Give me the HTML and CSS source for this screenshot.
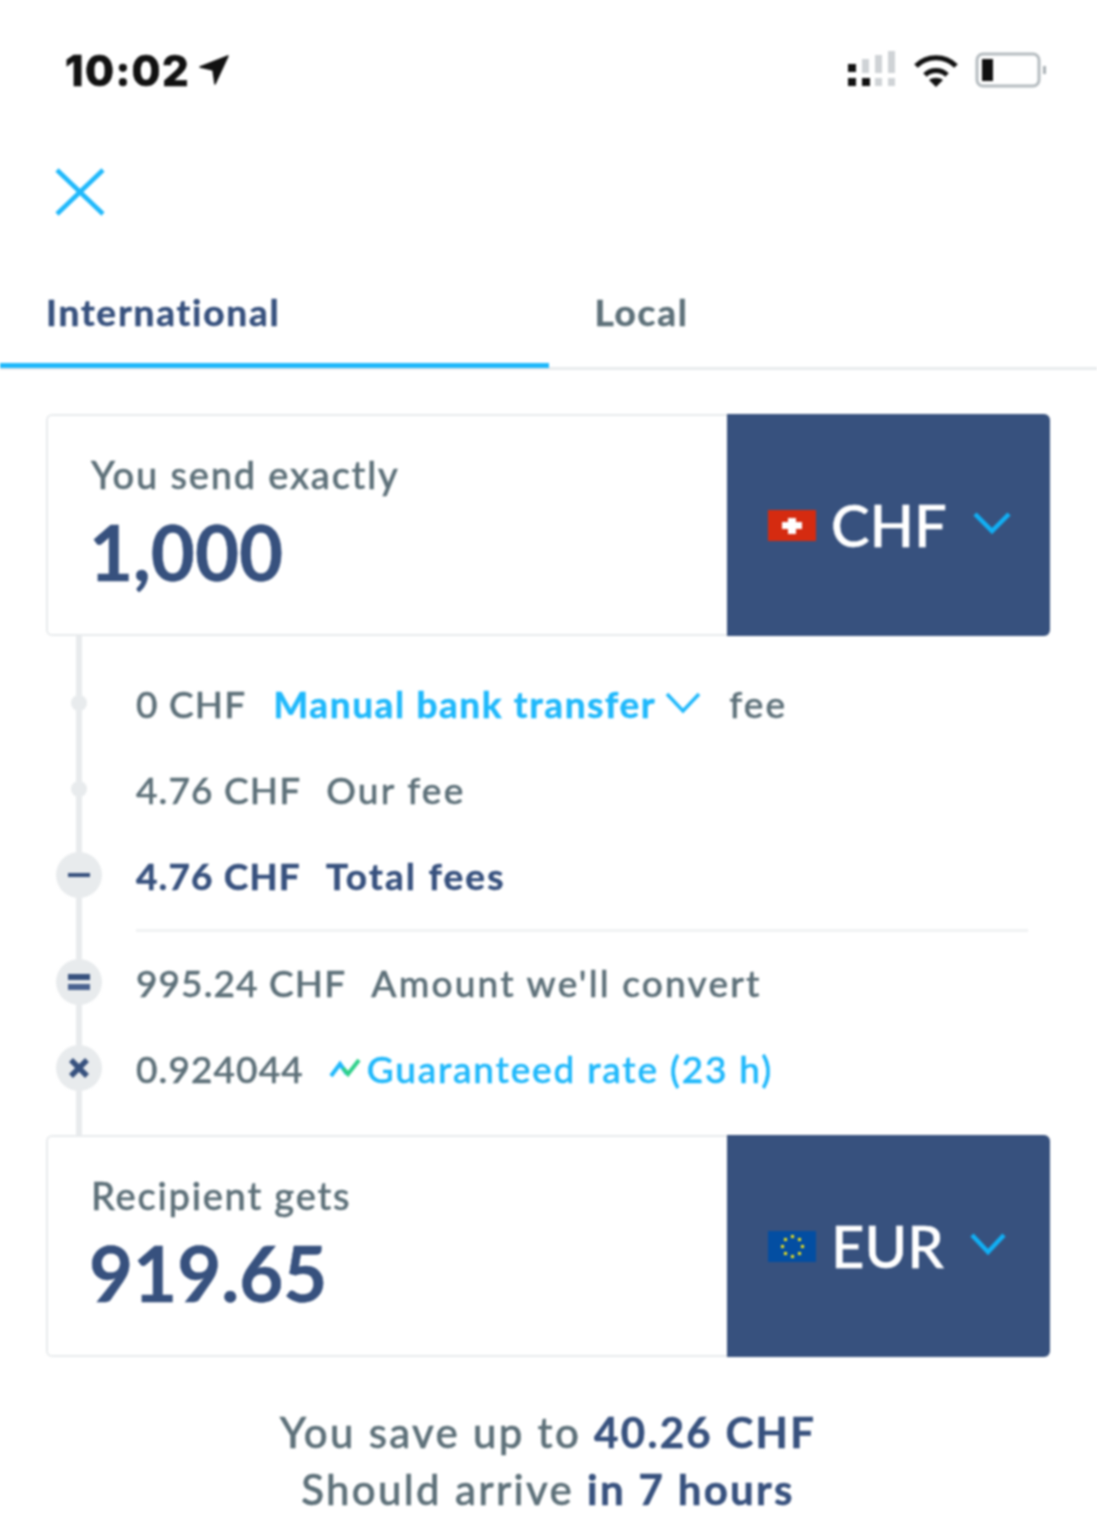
FILE: index.html
```html
<!DOCTYPE html>
<html lang="en">
<head>
  <meta charset="UTF-8">
  <meta name="viewport" content="width=device-width, initial-scale=1.0">
  <title>Send money</title>
  <link rel="stylesheet" href="styles.css">
</head>
<body>

<div class="status-bar">
  <div class="status-time">
    <span>10:02</span>
    <svg class="location-icon" width="30" height="30" viewBox="0 0 30 30"><path d="M29 1 1 12l13 3 2 14z" fill="#111" stroke="#111" stroke-width="1.5" stroke-linejoin="round"/></svg>
  </div>
  <div class="status-icons">
    <svg width="50" height="38" viewBox="0 0 50 38">
      <g fill="#111"><rect x="1" y="13" width="8" height="8"/><rect x="1" y="27" width="8" height="8"/><rect x="15" y="27" width="8" height="8"/></g>
      <g fill="#cfd3d6"><rect x="15" y="8" width="7" height="14"/><rect x="28" y="4" width="7" height="18"/><rect x="28" y="27" width="7" height="8"/><rect x="41" y="0" width="7" height="22"/><rect x="41" y="27" width="7" height="8"/></g>
    </svg>
    <svg width="46" height="38" viewBox="0 0 46 38">
      <g fill="none" stroke="#111" stroke-width="5"><path d="M3 15C14 4 32 4 43 15"/><path d="M12 24c6-6 16-6 22 0"/></g>
      <path d="M23 36l-7-7c4-3 10-3 14 0z" fill="#111"/>
    </svg>
    <svg width="72" height="38" viewBox="0 0 72 38">
      <rect x="2" y="3" width="62" height="32" rx="6" fill="#fff" stroke="#b4bbbf" stroke-width="3"/>
      <rect x="7" y="8" width="11" height="22" fill="#111"/>
      <rect x="68" y="15" width="3" height="8" fill="#a9b1b5"/>
    </svg>
  </div>
</div>

<div class="close-row">
  <svg width="50" height="48" viewBox="0 0 50 48"><path d="M2 2l46 44M48 2 2 46" fill="none" stroke="#1fb8fb" stroke-width="4.5"/></svg>
</div>

<div class="tabs">
  <div class="tab active">International</div>
  <div class="tab">Local</div>
</div>

<div class="calculator">
  <div class="amount-card">
    <div class="amount-info">
      <div class="amount-label">You send exactly</div>
      <div class="amount-value">1,000</div>
    </div>
    <div class="currency-button">
      <svg class="flag" width="48" height="31" viewBox="0 0 48 31">
        <rect width="48" height="31" fill="#d52b10"/>
        <path d="M20 8h8v4h6v7h-6v5h-8v-5h-6v-7h6z" fill="#fff"/>
      </svg>
      <span class="currency-code">CHF</span>
      <svg class="currency-arrow" width="38" height="24" viewBox="0 0 38 24"><path d="M2 3l17 17L36 3" fill="none" stroke="#11b0f5" stroke-width="4.5"/></svg>
    </div>
  </div>

  <div class="breakdown">
    <div class="row">
      <div class="marker"><span class="dot"></span></div>
      <span class="row-amount zero">0 CHF</span>
      <span class="row-link strong">Manual bank transfer</span>
      <svg class="method-arrow" width="36" height="24" viewBox="0 0 36 24"><path d="M2 3l16 17L34 3" fill="none" stroke="#1fb8fb" stroke-width="3.5"/></svg>
      <span class="row-text fee-word">fee</span>
    </div>
    <div class="row">
      <div class="marker"><span class="dot"></span></div>
      <span class="row-amount">4.76 CHF</span>
      <span class="row-text">Our fee</span>
    </div>
    <div class="row total">
      <div class="marker"><span class="circle">
        <svg width="22" height="22" viewBox="0 0 22 22"><rect y="9" width="22" height="4" fill="#37517e"/></svg>
      </span></div>
      <span class="row-amount">4.76 CHF</span>
      <span class="row-text">Total fees</span>
    </div>
    <div class="divider"></div>
    <div class="row">
      <div class="marker"><span class="circle">
        <svg width="22" height="22" viewBox="0 0 22 22"><rect y="3" width="22" height="6" fill="#37517e"/><rect y="13" width="22" height="6" fill="#4a6390"/></svg>
      </span></div>
      <span class="row-amount">995.24 CHF</span>
      <span class="row-text">Amount we'll convert</span>
    </div>
    <div class="row">
      <div class="marker"><span class="circle">
        <svg width="22" height="22" viewBox="0 0 22 22"><path d="M3 3l16 16M19 3 3 19" fill="none" stroke="#37517e" stroke-width="5.5"/></svg>
      </span></div>
      <span class="row-amount">0.924044</span>
      <svg class="rate-icon" width="32" height="22" viewBox="0 0 32 22">
        <path d="M2 19 11 7l7 10" fill="none" stroke="#1fb8fb" stroke-width="4"/>
        <path d="M14 11l5 6L30 3" fill="none" stroke="#2ed08a" stroke-width="4"/>
      </svg>
      <span class="row-link">Guaranteed rate (23 h)</span>
    </div>
  </div>

  <div class="amount-card">
    <div class="amount-info">
      <div class="amount-label">Recipient gets</div>
      <div class="amount-value">919.65</div>
    </div>
    <div class="currency-button">
      <svg class="flag" width="48" height="31" viewBox="0 0 48 31">
        <rect width="48" height="31" fill="#034ea2"/>
        <g fill="#f6e516">
          <rect x="23" y="4" width="3" height="3"/><rect x="30" y="7" width="3" height="3"/><rect x="33" y="14" width="3" height="3"/><rect x="30" y="21" width="3" height="3"/><rect x="23" y="24" width="3" height="3"/><rect x="16" y="21" width="3" height="3"/><rect x="13" y="14" width="3" height="3"/><rect x="16" y="7" width="3" height="3"/>
        </g>
      </svg>
      <span class="currency-code">EUR</span>
      <svg class="currency-arrow" width="36" height="24" viewBox="0 0 36 24"><path d="M2 3l16 17L34 3" fill="none" stroke="#11b0f5" stroke-width="4.5"/></svg>
    </div>
  </div>

  <div class="summary">
    <div>You save up to <b>40.26 CHF</b></div>
    <div>Should arrive <b>in 7 hours</b></div>
  </div>
</div>

</body>
</html>
```

FILE: styles.css
```css
html, body {
    height: 100%;
}

body {
    font-family: Lato, 'Open Sans', sans-serif;
    font-weight: 500;
    margin: 0;
    background-color: #ffffff;
    color: #37517e;
    overflow: hidden;
    /* the source capture is an upscaled, soft image */
    filter: blur(0.9px);
    -webkit-text-stroke: 0.5px;
}

/* status bar */
.status-bar {
    display: flex;
    justify-content: space-between;
    align-items: center;
    height: 140px;
    padding: 0 50px 0 65px;
    box-sizing: border-box;
}

.status-time {
    display: flex;
    align-items: center;
    gap: 9px;
    font-family: Inter, sans-serif;
    font-weight: 800;
    font-size: 42px;
    letter-spacing: 1.4px;
    color: #111;
}

.status-icons {
    display: flex;
    align-items: center;
    gap: 16px;
}

.close-row {
    height: 118px;
    padding: 28px 0 0 55px;
    box-sizing: border-box;
}

/* tabs */
.tabs {
    display: flex;
    height: 112px;
    box-sizing: border-box;
    border-bottom: 3px solid #e8ebed;
}

.tab {
    width: 50%;
    height: 110px;
    box-sizing: border-box;
    padding: 31px 0 0 46px;
    font-size: 37px;
    line-height: 46px;
    font-weight: 700;
    letter-spacing: 1.8px;
    color: #5d7079;
}

.tab.active {
    color: #37517e;
    border-bottom: 5px solid #1fb8fb;
}

/* calculator */
.calculator {
    padding: 44px 47px 0 46px;
}

.amount-card {
    display: flex;
    height: 222px;
    box-sizing: border-box;
    border: 2px solid #e8ebed;
    border-radius: 6px;
}

.amount-info {
    flex: 1;
    padding: 34px 0 0 43px;
}

.amount-label {
    margin-bottom: 10px;
    font-size: 38px;
    line-height: 48px;
    letter-spacing: 1.8px;
    color: #5d7079;
}

.amount-value {
    margin-left: -2px;
    font-size: 76px;
    line-height: 88px;
    font-weight: 700;
    color: #37517e;
}

.currency-button {
    display: flex;
    align-items: center;
    width: 323px;
    margin: -2px -2px -2px 0;
    padding-left: 41px;
    box-sizing: border-box;
    background-color: #37517e;
    border-radius: 0 6px 6px 0;
    color: #ffffff;
}

.currency-code {
    margin-left: 15px;
    font-size: 58px;
    line-height: 60px;
}

.currency-arrow {
    margin: -4px 0 0 26px;
}

/* fee breakdown */
.breakdown {
    position: relative;
    padding: 26px 22px 22px 0;
}

.breakdown::before {
    content: "";
    position: absolute;
    left: 30px;
    top: 0;
    bottom: 0;
    width: 6px;
    background-color: #e8ebed;
}

.row {
    position: relative;
    display: flex;
    align-items: center;
    height: 86px;
    padding-bottom: 4px;
    box-sizing: border-box;
    font-size: 37px;
    letter-spacing: 1.1px;
    color: #5d7079;
}

.marker {
    display: flex;
    justify-content: center;
    align-items: center;
    width: 66px;
    margin-right: 24px;
}

.dot {
    width: 16px;
    height: 16px;
    border-radius: 50%;
    background-color: #e8ebed;
}

.circle {
    display: flex;
    justify-content: center;
    align-items: center;
    width: 46px;
    height: 46px;
    border-radius: 50%;
    background-color: #e8ebed;
}

.row-amount {
    margin-right: 25px;
}

.row-amount.zero {
    margin-right: 27px;
}

.row-text {
    letter-spacing: 2.2px;
}

.row-link {
    color: #1fb8fb;
    letter-spacing: 1.8px;
}

.row-link.strong {
    font-weight: 700;
    letter-spacing: 1.6px;
}

.method-arrow {
    margin-left: 9px;
}

.fee-word {
    margin-left: 28px;
}

.rate-icon {
    margin-right: 6px;
}

.total {
    color: #37517e;
    font-weight: 700;
}

.divider {
    height: 3px;
    margin: 9px 0 9px 90px;
    background-color: #f0f2f3;
}

.summary {
    padding-top: 47px;
    text-align: center;
    font-size: 42px;
    line-height: 57px;
    letter-spacing: 2.3px;
    color: #5d7079;
}

.summary b {
    color: #37517e;
}
```
